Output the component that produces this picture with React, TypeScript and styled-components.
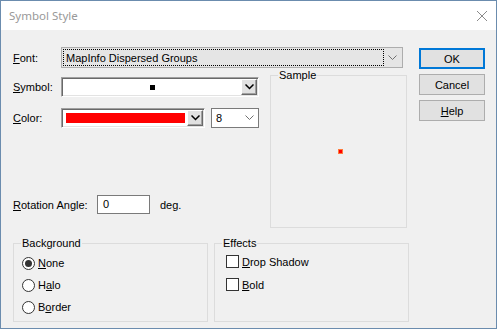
import React from "react";
import styled, { createGlobalStyle } from "styled-components";

const GlobalStyle = createGlobalStyle`
  html, body {
    margin: 0;
    padding: 0;
    background: #f0f0f0;
  }
  body {
    font-family: "Liberation Sans", Arial, sans-serif;
    font-size: 11px;
    color: #000;
  }
`;

const Window = styled.div`
  width: 497px;
  height: 329px;
  box-sizing: border-box;
  border: 1px solid #6b8cae;
  background: #f0f0f0;
  display: flex;
  flex-direction: column;
  overflow: hidden;
`;

const TitleBar = styled.div`
  height: 29px;
  flex: none;
  background: #fff;
  display: flex;
  align-items: center;
  justify-content: space-between;
  padding: 0 9px 0 8px;
  font-family: "Noto Sans", sans-serif;
  font-size: 11.5px;
  color: #999;
`;

const Body = styled.div`
  display: flex;
  padding: 17px 0 0 12px;
`;

const MainCol = styled.div`
  width: 396px;
  display: flex;
  flex-direction: column;
`;

const Row = styled.div<{ $top?: number; $h?: number }>`
  display: flex;
  align-items: center;
  margin-top: ${(p) => p.$top ?? 0}px;
  height: ${(p) => p.$h ?? 20}px;
`;

const Label = styled.label<{ $w?: number }>`
  width: ${(p) => p.$w ?? 48}px;
  flex: none;
  white-space: nowrap;
`;

const FlatCombo = styled.div`
  width: 342px;
  height: 21px;
  box-sizing: border-box;
  border: 1px solid #adadad;
  background: #e5e5e5;
  display: flex;
  align-items: center;
  padding: 1px;
`;

const FocusRect = styled.div`
  flex: 1;
  height: 100%;
  box-sizing: border-box;
  border: 1px dotted #000;
  display: flex;
  align-items: center;
  padding-left: 2px;
`;

const ChevronSlot = styled.div<{ $w?: number }>`
  width: ${(p) => p.$w ?? 17}px;
  display: flex;
  align-items: center;
  justify-content: center;
`;

const SunkenCombo = styled.div<{ $w: number }>`
  width: ${(p) => p.$w}px;
  height: 20px;
  box-sizing: border-box;
  border-top: 1px solid #a0a0a0;
  border-left: 1px solid #a0a0a0;
  border-right: 1px solid #fff;
  border-bottom: 1px solid #fff;
  box-shadow: inset 1px 1px 0 #696969, inset -1px -1px 0 #e3e3e3;
  background: #fff;
  display: flex;
  padding: 1px;
`;

const ComboField = styled.div`
  flex: 1;
  display: flex;
  align-items: center;
  justify-content: center;
  padding: 3px 2px 3px 3px;
`;

const ColorSwatch = styled.div<{ $color: string }>`
  width: 100%;
  height: 100%;
  background: ${(p) => p.$color};
`;

const SymbolGlyph = styled.div`
  width: 5px;
  height: 5px;
  background: #000;
`;

const DropButton = styled.div`
  width: 16px;
  box-sizing: border-box;
  background: #e1e1e1;
  border-top: 1px solid #fff;
  border-left: 1px solid #fff;
  border-right: 1px solid #696969;
  border-bottom: 1px solid #696969;
  box-shadow: inset -1px -1px 0 #a0a0a0;
  display: flex;
  align-items: center;
  justify-content: center;
`;

const SmallCombo = styled.div<{ $w: number }>`
  width: ${(p) => p.$w}px;
  height: 20px;
  margin-left: 6px;
  box-sizing: border-box;
  border: 1px solid #7a7a7a;
  background: #fff;
  display: flex;
  align-items: center;
  padding-left: 4px;
`;

const TextBox = styled.div`
  width: 53px;
  height: 19px;
  box-sizing: border-box;
  border: 1px solid #7a7a7a;
  background: #fff;
  padding: 2px 5px;
  line-height: 13px;
`;

const Unit = styled.span`
  margin-left: 10px;
`;

const MidRow = styled.div`
  display: flex;
  margin-top: 8px;
`;

const FieldsCol = styled.div`
  width: 257px;
  display: flex;
  flex-direction: column;
`;

const GroupBox = styled.fieldset<{ $w: number; $h: number; $lift?: number }>`
  width: ${(p) => p.$w}px;
  height: ${(p) => p.$h}px;
  box-sizing: border-box;
  margin: ${(p) => -(p.$lift ?? 0)}px 0 0 0;
  padding: 0 0 0 8px;
  border: 1px solid #dcdcdc;
  min-inline-size: 0;
  display: flex;
  flex-direction: column;
`;

const Legend = styled.legend`
  padding: 0 1px;
  margin-left: -1px;
  line-height: 13px;
`;

const BottomRow = styled.div`
  display: flex;
  gap: 6px;
  margin-top: 9px;
`;

const OptionRow = styled.div<{ $h: number }>`
  display: flex;
  align-items: center;
  height: ${(p) => p.$h}px;
`;

const Radio = styled.span<{ $checked?: boolean }>`
  width: 13px;
  height: 13px;
  box-sizing: border-box;
  border-radius: 50%;
  border: 1px solid #333;
  background: #fff;
  display: inline-flex;
  align-items: center;
  justify-content: center;
  margin-right: 3px;
  &::after {
    content: "";
    width: 7px;
    height: 7px;
    border-radius: 50%;
    background: ${(p) => (p.$checked ? "#333" : "transparent")};
  }
`;

const Check = styled.span`
  width: 13px;
  height: 13px;
  box-sizing: border-box;
  border: 1px solid #333;
  background: #fff;
  margin-right: 3px;
  margin-left: 3px;
`;

const ButtonCol = styled.div`
  display: flex;
  flex-direction: column;
  gap: 5px;
  margin: 1px 0 0 10px;
`;

const Button = styled.button<{ $default?: boolean }>`
  width: 66px;
  height: 21px;
  box-sizing: border-box;
  padding: 0;
  font: inherit;
  color: #000;
  background: #e1e1e1;
  border: ${(p) => (p.$default ? "2px solid #0078d7" : "1px solid #adadad")};
`;

const SampleArea = styled.div`
  flex: 1;
  position: relative;
`;

const SampleDot = styled.div`
  position: absolute;
  left: 59px;
  top: 67px;
  width: 5px;
  height: 5px;
  box-sizing: border-box;
  background: #ff0000;
  border: 1px solid #ff7a3c;
`;

const Chevron = ({ bold }: { bold?: boolean }) => (
  <svg width="9" height="6" viewBox="0 0 9 6">
    <polyline
      points="0.5,0.5 4.5,4.5 8.5,0.5"
      fill="none"
      stroke={bold ? "#000" : "#707070"}
      strokeWidth={bold ? 1.5 : 1}
    />
  </svg>
);

const CloseIcon = () => (
  <svg width="10" height="10" viewBox="0 0 10 10">
    <path d="M0 0 L10 10 M10 0 L0 10" stroke="#8a8a8a" strokeWidth="1" />
  </svg>
);

const App: React.FC = () => (
  <>
    <GlobalStyle />
    <Window>
      <TitleBar>
        <span>Symbol Style</span>
        <CloseIcon />
      </TitleBar>
      <Body>
        <MainCol>
          <Row $h={21}>
            <Label>
              <u>F</u>ont:
            </Label>
            <FlatCombo>
              <FocusRect>MapInfo Dispersed Groups</FocusRect>
              <ChevronSlot>
                <Chevron />
              </ChevronSlot>
            </FlatCombo>
          </Row>
          <MidRow>
            <FieldsCol>
              <Row $top={1}>
                <Label>
                  <u>S</u>ymbol:
                </Label>
                <SunkenCombo $w={198}>
                  <ComboField>
                    <SymbolGlyph />
                  </ComboField>
                  <DropButton>
                    <Chevron bold />
                  </DropButton>
                </SunkenCombo>
              </Row>
              <Row $top={11}>
                <Label>
                  <u>C</u>olor:
                </Label>
                <SunkenCombo $w={144}>
                  <ComboField>
                    <ColorSwatch $color="#ff0000" />
                  </ComboField>
                  <DropButton>
                    <Chevron bold />
                  </DropButton>
                </SunkenCombo>
                <SmallCombo $w={48}>
                  <span style={{ flex: 1 }}>8</span>
                  <ChevronSlot $w={18}>
                    <Chevron />
                  </ChevronSlot>
                </SmallCombo>
              </Row>
              <Row $top={67} $h={19}>
                <Label $w={84}>
                  <u>R</u>otation Angle:
                </Label>
                <TextBox>0</TextBox>
                <Unit>deg.</Unit>
              </Row>
            </FieldsCol>
            <GroupBox $w={137} $h={159} $lift={7}>
              <Legend>Sample</Legend>
              <SampleArea>
                <SampleDot />
              </SampleArea>
            </GroupBox>
          </MidRow>
          <BottomRow>
            <GroupBox $w={195} $h={85}>
              <Legend>Background</Legend>
              <OptionRow $h={22} style={{ marginTop: 2 }}>
                <Radio $checked />
                <span>
                  <u>N</u>one
                </span>
              </OptionRow>
              <OptionRow $h={22}>
                <Radio />
                <span>
                  H<u>a</u>lo
                </span>
              </OptionRow>
              <OptionRow $h={22}>
                <Radio />
                <span>
                  B<u>o</u>rder
                </span>
              </OptionRow>
            </GroupBox>
            <GroupBox $w={195} $h={85}>
              <Legend>Effects</Legend>
              <OptionRow $h={23}>
                <Check />
                <span>
                  <u>D</u>rop Shadow
                </span>
              </OptionRow>
              <OptionRow $h={23}>
                <Check />
                <span>
                  <u>B</u>old
                </span>
              </OptionRow>
            </GroupBox>
          </BottomRow>
        </MainCol>
        <ButtonCol>
          <Button $default>OK</Button>
          <Button>Cancel</Button>
          <Button>
            <u>H</u>elp
          </Button>
        </ButtonCol>
      </Body>
    </Window>
  </>
);

export default App;
